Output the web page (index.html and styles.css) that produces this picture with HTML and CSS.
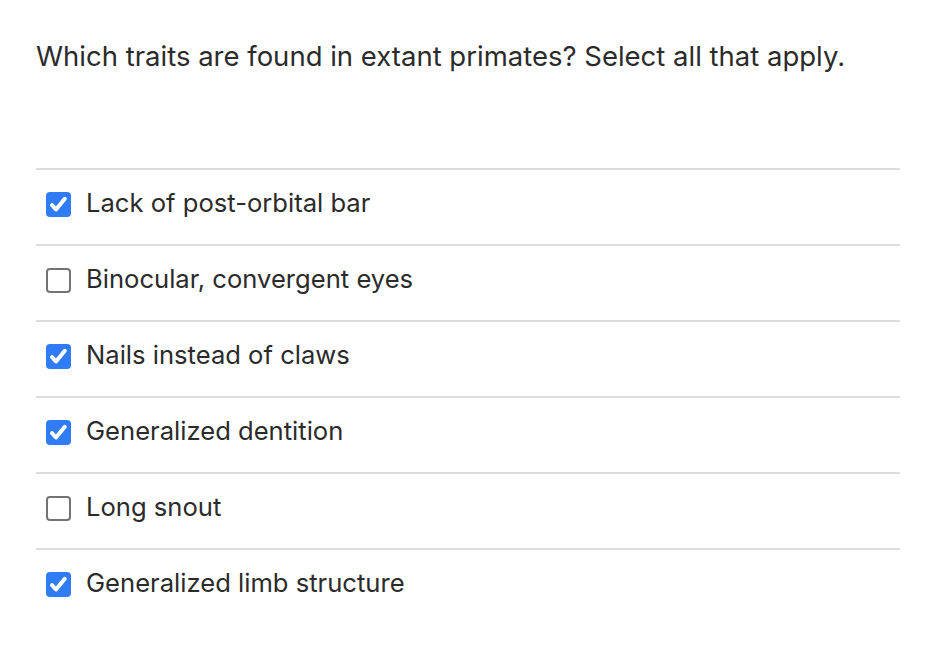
FILE: index.html
```html
<!DOCTYPE html>
<html lang="en">
<head>
<meta charset="utf-8">
<link rel="stylesheet" href="styles.css">
</head>
<body>
<div class="question">
  <p class="prompt">Which traits are found in extant primates? Select all that apply.</p>
  <ul class="options">
    <li class="option"><span class="box checked"><svg viewBox="0 0 25 25" class="tick"><path d="M6 13.2l4 4.3 8.8-10.7" /></svg></span><span class="label">Lack of post-orbital bar</span></li>
    <li class="option"><span class="box"></span><span class="label">Binocular, convergent eyes</span></li>
    <li class="option"><span class="box checked"><svg viewBox="0 0 25 25" class="tick"><path d="M6 13.2l4 4.3 8.8-10.7" /></svg></span><span class="label">Nails instead of claws</span></li>
    <li class="option"><span class="box checked"><svg viewBox="0 0 25 25" class="tick"><path d="M6 13.2l4 4.3 8.8-10.7" /></svg></span><span class="label">Generalized dentition</span></li>
    <li class="option"><span class="box"></span><span class="label">Long snout</span></li>
    <li class="option"><span class="box checked"><svg viewBox="0 0 25 25" class="tick"><path d="M6 13.2l4 4.3 8.8-10.7" /></svg></span><span class="label">Generalized limb structure</span></li>
  </ul>
</div>
</body>
</html>
```
FILE: styles.css
```css
html, body {
  margin: 0;
  padding: 0;
  background: #fff;
}
body {
  font-family: Inter, "Open Sans", sans-serif;
  color: #2b2b2b;
}
.question {
  padding: 39px 34px 0 36px;
}
.prompt {
  margin: 0;
  font-size: 27.5px;
  line-height: 34px;
}
.options {
  list-style: none;
  margin: 95px 0 0 0;
  padding: 0;
}
.option {
  display: flex;
  align-items: flex-start;
  gap: 15px;
  height: 76px;
  box-sizing: border-box;
  padding: 18px 0 0 10px;
  border-top: 2px solid #dcdcdc;
  font-size: 25.6px;
  line-height: 30px;
}
.label {
  display: block;
}
.box {
  margin-top: 4px;
  width: 25px;
  height: 25px;
  border: 2px solid #737373;
  border-radius: 4px;
  box-sizing: border-box;
  flex: none;
  position: relative;
}
.box.checked {
  background: #2f7cf6;
  border-color: #2f7cf6;
}
.tick {
  position: absolute;
  left: -2px;
  top: -2px;
  width: 25px;
  height: 25px;
  fill: none;
  stroke: #fff;
  stroke-width: 4;
  stroke-linecap: round;
  stroke-linejoin: round;
}
```
